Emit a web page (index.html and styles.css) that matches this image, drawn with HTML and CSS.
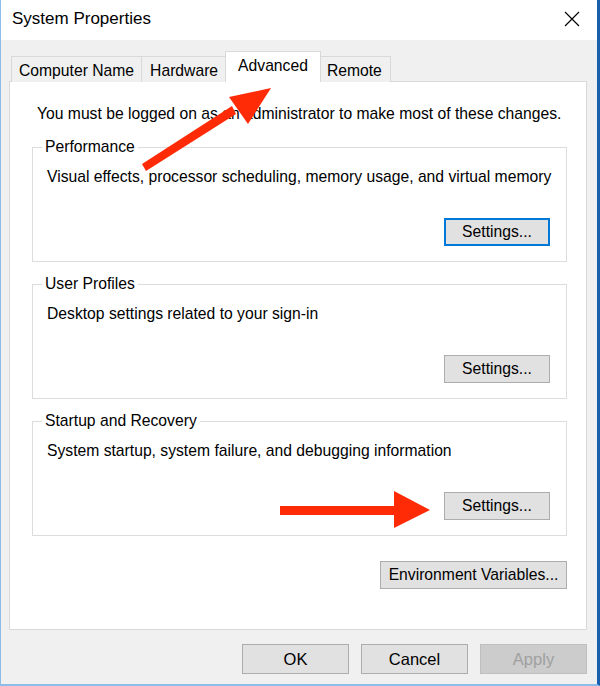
FILE: index.html
```html
<!DOCTYPE html>
<html>
<head>
  <meta charset="UTF-8">
  <title>System Properties</title>
  <link rel="stylesheet" href="styles.css">
</head>
<body>
  <div class="window">
    <div class="titlebar">
      <span class="title">System Properties</span>
      <svg class="close" width="16" height="16" viewBox="0 0 16 16">
        <path d="M1 1 L15 15 M15 1 L1 15" stroke="#000" stroke-width="1.2" fill="none"/>
      </svg>
    </div>

    <div class="content">
      <!-- Tabs -->
      <div class="tabs">
        <div class="tab">Computer Name</div>
        <div class="tab">Hardware</div>
        <div class="tab selected">Advanced</div>
        <div class="tab">Remote</div>
      </div>

      <div class="panel">
        <p class="note">You must be logged on as an administrator to make most of these changes.</p>

        <fieldset class="group">
          <legend>Performance</legend>
          <p class="desc">Visual effects, processor scheduling, memory usage, and virtual memory</p>
          <div class="row"><button class="btn focused">Settings...</button></div>
        </fieldset>

        <fieldset class="group">
          <legend>User Profiles</legend>
          <p class="desc">Desktop settings related to your sign-in</p>
          <div class="row"><button class="btn">Settings...</button></div>
        </fieldset>

        <fieldset class="group">
          <legend>Startup and Recovery</legend>
          <p class="desc">System startup, system failure, and debugging information</p>
          <div class="row"><button class="btn">Settings...</button></div>
        </fieldset>

        <div class="row env"><button class="btn wide">Environment Variables...</button></div>
      </div>

      <div class="footer">
        <button class="btn big">OK</button>
        <button class="btn big">Cancel</button>
        <button class="btn big disabled">Apply</button>
      </div>
    </div>

    <!-- annotation arrows -->
    <svg class="arrows" width="600" height="686" viewBox="0 0 600 686">
      <g fill="#ff2a06">
        <polygon points="142,164 232,106 236,114 146,171"/>
        <polygon points="271,88 229,97 248,124"/>
        <rect x="280" y="506" width="116" height="9"/>
        <polygon points="394,491 430,510 394,528"/>
      </g>
    </svg>
  </div>
</body>
</html>
```

FILE: styles.css
```css
body {
  margin: 0;
  background: #ffffff;
  font-family: "Liberation Sans", Arial, sans-serif;
  color: #000;
}

.window {
  position: relative;
  width: 600px;
  height: 686px;
  box-sizing: border-box;
  border-left: 1px solid #8dbbea;
  border-right: 3px solid #1a5fae;
  border-bottom: 2px solid #8dbbea;
  display: flex;
  flex-direction: column;
  overflow: hidden;
}

.titlebar {
  height: 40px;
  background: #ffffff;
  display: flex;
  align-items: center;
  justify-content: space-between;
  padding: 0 12px 0 11px;
  flex-shrink: 0;
}

.title {
  font-size: 17px;
  margin-top: -2px;
}

.close {
  margin-top: -3px;
  margin-right: 5px;
}

.content {
  flex: 1;
  background: #f0f0f0;
  display: flex;
  flex-direction: column;
  padding: 11px 8px 0 8px;
}

.tabs {
  display: flex;
  align-items: flex-end;
  padding-left: 3px;
  height: 31px;
  position: relative;
  z-index: 1;
  margin-bottom: -1px;
}

.tab {
  height: 26px;
  box-sizing: border-box;
  border: 1px solid #d9d9d9;
  border-bottom: none;
  background: #f0f0f0;
  font-size: 15.7px;
  line-height: 27px;
  padding: 0 7px;
  margin-left: -1px;
  white-space: nowrap;
}

.tab + .tab {
  padding: 0 8px;
}

.tab.selected {
  height: 31px;
  background: #ffffff;
  line-height: 28px;
  padding: 0 12px;
  margin: 0 -2px 0 -2px;
  position: relative;
  z-index: 2;
}

.panel {
  height: 549px;
  box-sizing: border-box;
  background: #ffffff;
  border: 1px solid #d9d9d9;
  margin-right: 2px;
  padding: 22px 19px 0 22px;
}

.note {
  margin: 0;
  font-size: 15.7px;
  line-height: 20px;
  padding-left: 5px;
  white-space: nowrap;
}

.group {
  margin: 13px 0 0 0;
  border: 1px solid #dcdcdc;
  padding: 0 16px 15px 14px;
  min-width: 0;
}

.group + .group {
  margin-top: 12px;
}

.group legend {
  font-size: 15.7px;
  line-height: 20px;
  padding: 0 3px;
  margin-left: -5px;
}

.desc {
  margin: 10px 0 0 0;
  font-size: 15.7px;
  line-height: 20px;
  white-space: nowrap;
}

.row {
  display: flex;
  justify-content: flex-end;
  margin-top: 31px;
}

.btn {
  font-family: "Liberation Sans", Arial, sans-serif;
  font-size: 15.7px;
  color: #000;
  background: #e1e1e1;
  border: 1px solid #adadad;
  width: 106px;
  height: 28px;
  padding: 0;
}

.btn.focused {
  border: 2px solid #0078d7;
}

.env {
  margin-top: 25px;
}

.btn.wide {
  width: 187px;
}

.footer {
  display: flex;
  justify-content: flex-end;
  gap: 12px;
  padding-top: 14px;
  padding-right: 2px;
}

.btn.big {
  width: 107px;
  height: 30px;
  font-size: 16.5px;
}

.btn.disabled {
  background: #cccccc;
  border-color: #bfbfbf;
  color: #a0a0a0;
}

.arrows {
  position: absolute;
  top: 0;
  left: -1px;
  pointer-events: none;
}
```
